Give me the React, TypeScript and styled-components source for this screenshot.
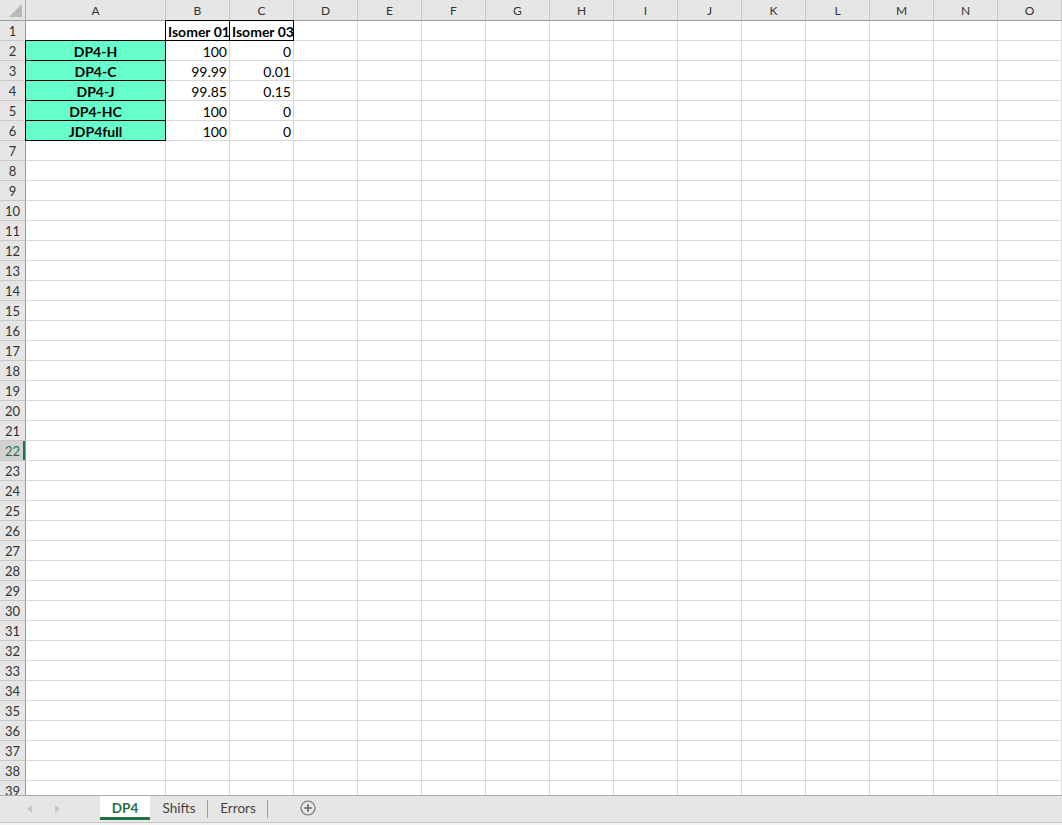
import React from "react";
import styled, { createGlobalStyle, css } from "styled-components";

const GlobalStyle = createGlobalStyle`
  *, *::before, *::after { box-sizing: border-box; }
  html, body { margin: 0; padding: 0; background: #fff; }
  body { font-family: Lato, "Liberation Sans", sans-serif; overflow: hidden; }
`;

const COLS = ["A", "B", "C", "D", "E", "F", "G", "H", "I", "J", "K", "L", "M", "N", "O"];
const ROWS = Array.from({ length: 39 }, (_, i) => i + 1);
const SELECTED_ROW = 22;

type CellData = { text: string; bold?: boolean; align?: "left" | "center" | "right"; fill?: string; boxed?: boolean };

const data: Record<string, CellData> = {
  B1: { text: "Isomer 01", bold: true, boxed: true },
  C1: { text: "Isomer 03", bold: true, boxed: true },
  A2: { text: "DP4-H", bold: true, align: "center", fill: "#66ffcc", boxed: true },
  A3: { text: "DP4-C", bold: true, align: "center", fill: "#66ffcc", boxed: true },
  A4: { text: "DP4-J", bold: true, align: "center", fill: "#66ffcc", boxed: true },
  A5: { text: "DP4-HC", bold: true, align: "center", fill: "#66ffcc", boxed: true },
  A6: { text: "JDP4full", bold: true, align: "center", fill: "#66ffcc", boxed: true },
  B2: { text: "100", align: "right" },
  C2: { text: "0", align: "right" },
  B3: { text: "99.99", align: "right" },
  C3: { text: "0.01", align: "right" },
  B4: { text: "99.85", align: "right" },
  C4: { text: "0.15", align: "right" },
  B5: { text: "100", align: "right" },
  C5: { text: "0", align: "right" },
  B6: { text: "100", align: "right" },
  C6: { text: "0", align: "right" },
};

const Window = styled.div`
  width: 1062px;
  height: 825px;
  display: flex;
  flex-direction: column;
  background: #fff;
  overflow: hidden;
`;

const Sheet = styled.div`
  height: 795px;
  flex: none;
  overflow: hidden;
  display: grid;
  grid-template-columns: 26px 140px repeat(14, 64px);
  grid-auto-rows: 20px;
  grid-template-rows: 21px;
  align-content: start;
`;

const Corner = styled.div`
  background: #e6e6e6;
  border-right: 1px solid #ababab;
  border-bottom: 1px solid #9b9b9b;
  position: relative;
  &::after {
    content: "";
    position: absolute;
    right: 3px;
    bottom: 3px;
    width: 0;
    height: 0;
    border-left: 13px solid transparent;
    border-bottom: 13px solid #b8b8b8;
  }
`;

const ColHead = styled.div`
  background: #e6e6e6;
  border-right: 1px solid #c8c8c8;
  border-bottom: 1px solid #9b9b9b;
  display: flex;
  align-items: center;
  justify-content: center;
  font-size: 12px;
  color: #333;
  padding-top: 1px;
`;

const RowHead = styled.div<{ $selected?: boolean }>`
  background: ${(p) => (p.$selected ? "#d2d2d2" : "#e6e6e6")};
  border-right: 1px solid #9b9b9b;
  border-bottom: 1px solid #c8c8c8;
  display: flex;
  align-items: center;
  justify-content: center;
  font-size: 13px;
  padding-top: 1px;
  color: ${(p) => (p.$selected ? "#217346" : "#333")};
  ${(p) =>
    p.$selected &&
    css`
      box-shadow: inset -2px 0 0 #217346;
    `}
`;

const Cell = styled.div<{ $bold?: boolean; $align?: string; $fill?: string; $boxed?: boolean }>`
  position: relative;
  border-right: 1px solid #dadada;
  border-bottom: 1px solid #dadada;
  background: ${(p) => p.$fill || "#fff"};
  font-size: 14px;
  font-weight: ${(p) => (p.$bold ? 700 : 400)};
  color: #000;
  display: flex;
  align-items: center;
  justify-content: ${(p) =>
    p.$align === "center" ? "center" : p.$align === "right" ? "flex-end" : "flex-start"};
  padding: 2px 2px 0 2px;
  white-space: nowrap;
  line-height: 17px;
  ${(p) =>
    p.$boxed &&
    css`
      &::after {
        content: "";
        position: absolute;
        top: -1px;
        left: -1px;
        right: -1px;
        bottom: -1px;
        border: 1px solid #000;
        pointer-events: none;
      }
    `}
`;

const TabBar = styled.div`
  height: 28px;
  flex: none;
  border-top: 1px solid #ababab;
  border-bottom: 1px solid #c6c6c6;
  background: #e6e6e6;
  display: flex;
  align-items: stretch;
`;

const Footer = styled.div`
  flex: 1;
  background: #f3f3f3;
`;

const Nav = styled.div`
  width: 100px;
  display: flex;
  align-items: center;
  padding-left: 27px;
  gap: 23px;
`;

const Arrow = styled.span<{ $dir: "left" | "right" }>`
  width: 0;
  height: 0;
  border-top: 4px solid transparent;
  border-bottom: 4px solid transparent;
  ${(p) =>
    p.$dir === "left"
      ? css`border-right: 5px solid #c4c4c4;`
      : css`border-left: 5px solid #c4c4c4;`}
`;

const Tab = styled.div<{ $active?: boolean; $w: number }>`
  width: ${(p) => p.$w}px;
  display: flex;
  align-items: center;
  justify-content: center;
  font-size: 13.5px;
  position: relative;
  margin-bottom: 2px;
  ${(p) =>
    p.$active
      ? css`
          background: #fff;
          color: #217346;
          font-weight: 700;
          box-shadow: inset 0 -3px 0 #217346;
          padding-bottom: 1px;
        `
      : css`
          color: #444;
          &::after {
            content: "";
            position: absolute;
            right: 0;
            top: 4px;
            bottom: 2px;
            width: 1px;
            background: #9e9e9e;
          }
        `}
`;

const AddButton = styled.div`
  width: 80px;
  display: flex;
  align-items: center;
  justify-content: center;
  padding-bottom: 2px;
`;

export default function App() {
  return (
    <>
      <GlobalStyle />
      <Window>
        <Sheet>
          <Corner />
          {COLS.map((c) => (
            <ColHead key={c}>{c}</ColHead>
          ))}
          {ROWS.map((r) => (
            <React.Fragment key={r}>
              <RowHead $selected={r === SELECTED_ROW}>{r}</RowHead>
              {COLS.map((c) => {
                const d = data[c + r];
                return (
                  <Cell
                    key={c + r}
                    $bold={d?.bold}
                    $align={d?.align}
                    $fill={d?.fill}
                    $boxed={d?.boxed}
                  >
                    {d?.text}
                  </Cell>
                );
              })}
            </React.Fragment>
          ))}
        </Sheet>
        <TabBar>
          <Nav>
            <Arrow $dir="left" />
            <Arrow $dir="right" />
          </Nav>
          <Tab $active $w={50}>DP4</Tab>
          <Tab $w={58}>Shifts</Tab>
          <Tab $w={60}>Errors</Tab>
          <AddButton>
            <svg width="16" height="16" viewBox="0 0 16 16">
              <circle cx="8" cy="8" r="7" fill="none" stroke="#777" strokeWidth="1.2" />
              <path d="M8 4.2v7.6M4.2 8h7.6" stroke="#666" strokeWidth="1.6" />
            </svg>
          </AddButton>
        </TabBar>
        <Footer />
      </Window>
    </>
  );
}
